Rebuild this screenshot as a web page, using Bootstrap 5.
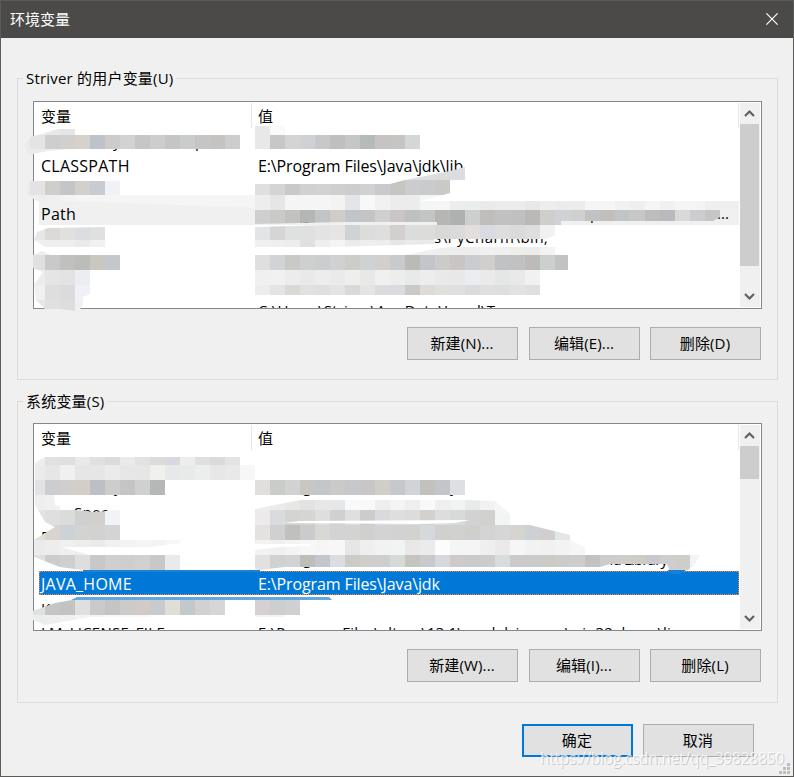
<!DOCTYPE html>
<html lang="zh-CN">
<head>
<meta charset="utf-8">
<meta name="viewport" content="width=device-width, initial-scale=1">
<title>环境变量</title>
<link href="https://cdn.jsdelivr.net/npm/bootstrap@5.3.0/dist/css/bootstrap.min.css" rel="stylesheet">
<style>
body{margin:0;background:#f0f0f0;overflow:hidden;color:#000;font:15px/20px "Open Sans","Noto Sans CJK SC",sans-serif}
.dialog{width:794px;height:777px;background:#f0f0f0;border:1px solid #5b5b59}
.titlebar{height:37px;background:#4c4a48;color:#fff;padding:0 15px 2px 9px}
.client{padding:40px 15px 0 16px}
.group-frame{border:1px solid #dcdcdc;height:302px;padding:22px 15px 0;margin-bottom:21px}
.group-frame.lower{padding-top:21px}
.group-title{top:-12px;left:5px;background:#f0f0f0;padding:0 3px;line-height:22px;white-space:nowrap;letter-spacing:.2px}
.var-list{width:729px;height:208px;border:1px solid #828790;background:#fff;overflow:hidden;padding:1px}
.list-head{height:26px;padding-left:4px}
.name-cell{width:217px;flex:none;padding-left:2px;letter-spacing:.25px}
.list-head .name-cell{width:213px;height:25px;border-right:1px solid #e5e5e5;letter-spacing:0}
.value-cell{padding-left:2px;white-space:nowrap;letter-spacing:-.12px}
.list-head .value-cell{height:25px;border-right:1px solid #e5e5e5;padding-left:6px;margin-right:1px}
.head-label{padding-top:3px}
.list-line{height:24px;margin-left:4px;width:700px;line-height:26px;flex:none;font-size:16px}
.list-line.tight{font-size:15px;line-height:27px}
.tight .value-cell{letter-spacing:.18px}
.hovered{background:#f0f0f0}
.chosen{background:#0078d7;color:#fff;outline:1px dotted #ff8728;outline-offset:-1px}
.scroll-track{width:20px;height:204px;background:#f0f0f0;flex:none}
.scroll-track svg{display:block;flex:none}
.thumb-long,.thumb-short{width:19px;background:#cdcdcd;height:142px}
.thumb-short{height:33px}
.win-btn{width:111px;height:33px;border:1px solid #adadad;border-radius:0;background:#e1e1e1;color:#000;padding:0 1px 1px 0;font-size:15px;line-height:20px;letter-spacing:.15px}
.win-btn.default-btn{border:2px solid #0078d7}
.btn-line{margin-top:18px;padding-right:1px}
.mid-btn{margin:0 10px 0 11px}
.footer-line{gap:10px;padding-right:24px}
.overlay-art{pointer-events:none;left:0;top:0}
.peek{font:15px "Open Sans",sans-serif}
</style>
<script src="https://cdn.jsdelivr.net/npm/bootstrap@5.3.0/dist/js/bootstrap.bundle.min.js"></script>
</head>
<body>
<main class="dialog position-relative">
  <header class="titlebar d-flex align-items-center justify-content-between">
    <span>环境变量</span>
    <svg width="12" height="12" viewBox="0 0 12 12"><path d="M.4.4l11.2 11.2M11.6.4L.4 11.6" stroke="#fff" stroke-width="1.2"/></svg>
  </header>
  <div class="client">
    <section class="group-frame position-relative">
      <div class="group-title position-absolute">Striver 的用户变量(U)</div>
      <div class="var-list d-flex">
        <div class="flex-grow-1">
          <div class="list-head d-flex"><div class="name-cell head-label">变量</div><div class="value-cell head-label flex-grow-1">值</div></div>
          <div class="list-line"></div>
          <div class="list-line d-flex"><div class="name-cell">CLASSPATH</div><div class="value-cell">E:\Program Files\Java\jdk\lib</div></div>
          <div class="list-line"></div>
          <div class="list-line hovered d-flex"><div class="name-cell">Path</div></div>
          <div class="list-line"></div><div class="list-line"></div><div class="list-line"></div>
          <div class="list-line tight d-flex"><div class="name-cell"></div><div class="value-cell">C:\Users\Striver\AppData\Local\T</div></div>
        </div>
        <div class="scroll-track d-flex flex-column">
          <svg width="19" height="21"><path d="M5 13l4.5-4.5L14 13" fill="none" stroke="#606060" stroke-width="2.2"/></svg>
          <div class="thumb-long"></div>
          <svg class="mt-auto" width="19" height="21"><path d="M5 8l4.5 4.5L14 8" fill="none" stroke="#606060" stroke-width="2.2"/></svg>
        </div>
      </div>
      <div class="btn-line d-flex justify-content-end">
        <button class="btn win-btn">新建(N)...</button><button class="btn win-btn mid-btn">编辑(E)...</button><button class="btn win-btn">删除(D)</button>
      </div>
    </section>
    <section class="group-frame lower position-relative">
      <div class="group-title position-absolute">系统变量(S)</div>
      <div class="var-list d-flex">
        <div class="flex-grow-1">
          <div class="list-head d-flex"><div class="name-cell head-label">变量</div><div class="value-cell head-label flex-grow-1">值</div></div>
          <div class="list-line"></div><div class="list-line"></div>
          <div class="list-line tight d-flex"><div class="name-cell">ComSpec</div><div class="value-cell">C</div></div>
          <div class="list-line tight d-flex"><div class="name-cell">D</div></div>
          <div class="list-line"></div>
          <div class="list-line chosen d-flex"><div class="name-cell">JAVA_HOME</div><div class="value-cell">E:\Program Files\Java\jdk</div></div>
          <div class="list-line tight d-flex"><div class="name-cell">K</div></div>
          <div class="list-line tight d-flex"><div class="name-cell">LM_LICENSE_FILE</div><div class="value-cell">E:\Program Files\altera\13.1\modelsim_ase\win32aloem\lic</div></div>
        </div>
        <div class="scroll-track d-flex flex-column">
          <svg width="19" height="21"><path d="M5 13l4.5-4.5L14 13" fill="none" stroke="#606060" stroke-width="2.2"/></svg>
          <div class="thumb-short"></div>
          <svg class="mt-auto" width="19" height="21"><path d="M5 8l4.5 4.5L14 8" fill="none" stroke="#606060" stroke-width="2.2"/></svg>
        </div>
      </div>
      <div class="btn-line d-flex justify-content-end">
        <button class="btn win-btn">新建(W)...</button><button class="btn win-btn mid-btn">编辑(I)...</button><button class="btn win-btn">删除(L)</button>
      </div>
    </section>
    <footer class="footer-line d-flex justify-content-end">
      <button class="btn win-btn default-btn">确定</button><button class="btn win-btn">取消</button>
    </footer>
  </div>
</main>
<svg class="overlay-art position-absolute" width="794" height="777" viewBox="0 0 794 777">
  <defs>
    <clipPath id="u1"><path d="M75 129V135H255V126H421V150H241V149H75L48 151 28 155 25 145 30 137 45 133 58 129Z"/></clipPath>
    <clipPath id="u2"><path d="M30 181H121V201H37L27 195V184ZM255 184H390L405 180 435 174 450 171 465 167V180H450V193L435 197 420 201H739V210H720V217L713 221H561V225H437V222H345L255 224ZM75 195H255V209L245 207 120 203 75 201Z"/></clipPath>
    <clipPath id="u3"><path d="M105 227V247H45L34 240 37 232 48 228ZM255 227L330 225H555V235L547 239H434V244L330 247H255Z"/></clipPath>
    <clipPath id="u4"><path d="M33 255L42 251 52 255H121V270H90V294L83 297V305L80 309H75V311L60 309H45L36 300 34 285 43 272 33 268ZM255 255H405L435 249 450 247H555V255H568V270H545L540 273V295H255Z"/></clipPath>
    <clipPath id="s1"><path d="M45 457H240V465H255V480H165V495H54L55 505 75 510 95 512 120 510V540H180V543L150 547H62L75 551 90 555H180V570H82L60 567 34 557V540L50 530 55 527 45 522 35 505V463Z"/></clipPath>
    <clipPath id="s2"><path clip-rule="evenodd" d="M255 480H465V495H255ZM255 509L300 500H470L495 501 510 514V525H530L570 535V540L585 547V555H700L695 564 687 571 680 574H671L667 564 610 564 600 567H285L259 570 255 569V550L280 547 310 546V544H255ZM283 523L300 521 470 520 455 523 420 524Z"/></clipPath>
    <clipPath id="s3"><path d="M33 611L55 603 72 600H301V615H285V617H90L45 625 33 620Z"/></clipPath>
    <clipPath id="bin"><path d="M434 239H555V250H434Z"/></clipPath>
    <clipPath id="lib"><path d="M604 564H670V572H604Z"/></clipPath>
  </defs>
  <g class="peek">
    <text x="113" y="147">y</text><text x="195" y="147">p</text>
    <text x="437" y="191">g</text><text x="302" y="219">g</text><text x="590" y="219">p</text><text x="694" y="219">_</text><text x="717" y="219">...</text>
    <text x="434" y="243" clip-path="url(#bin)" textLength="114">s\PyCharm\bin;</text>
    <text x="494" y="267">Q</text>
    <text x="114" y="492">y</text><text x="303" y="492">g</text><text x="450" y="492">y</text>
    <text x="303" y="564">g</text><text x="604" y="565" clip-path="url(#lib)" textLength="64">nd Library</text><text x="690" y="565">,</text>
  </g>
  <path d="M83 570H260V572H83Z" fill="#1e82d3"/>
  <g id="mosaic"></g>
  <path d="M667 570H686L680 574H672Z" fill="#1980d7"/>
  <path d="M71 600L77 597H329L332 600Z" fill="#63a7df"/>
  <g fill="#bdbdbd"><path d="M787 763h3v3h-3zM783 767h3v3h-3zM787 767h3v3h-3zM779 771h3v3h-3zM783 771h3v3h-3zM787 771h3v3h-3z"/></g>
  <g font-family="Open Sans, sans-serif" font-size="15.5">
    <text x="541" y="765" textLength="244" fill="#999" fill-opacity=".45">https://blog.csdn.net/qq_39828850</text>
    <text x="540" y="764" textLength="244" fill="#fff" fill-opacity=".75">https://blog.csdn.net/qq_39828850</text>
  </g>
</svg>
<script>
// Each strip: clip id, x, y, height, then one colour per 15px cell.
const strips = [
['u1',15,126,9,'ebebeb ebebeb e8e8e8 e4e5e5'],
['u1',15,135,14,'ebebeb e4e4e4 cdced0 d1d0ce d6d2cb bec2c9 cdcccb d2d2d2 c6c6c6 cdcdce c4c6c6 cacccb c6c5c4 c4c3c2 cdcdcf'],
['u1',15,149,6,'ececec ebebeb eeeeee f3f3f3'],
['u1',255,126,9,'e8e8e8 fafafa'],
['u1',255,135,14,'e8e8e7 c6c7c9 d6d4d2 cfd1d5 c7c8c9 c1bfbd c6c6c7 b5babb c5c4c2 c6c5c4 d3d7d7'],
['u2',15,181,14,'ebebeb e4e2e4 cfceca c4c5c9 d3cfcb c8cbcf f1f2f5'],
['u2',15,195,15,'eeeeee ededed efefef f3f3f3 f5f5f5 f5f5f5 f5f5f5 f5f5f5 f5f5f5 f5f5f5 f5f5f5 f5f5f5 f5f5f5 f5f5f5 f5f5f5 f5f5f5'],
['u2',405,165,15,'dddddd dddddd dcdcdd dcdde0'],
['u2',255,180,15,'e0dfdd d3d5d5 c9cac8 d0d2d2 d2d2d2 cfcfd0 cdcec9 d1d1d2 c9cacd c6c5c4 ccccce cacbcc c9cac6 dadbde'],
['u2',255,195,15,'ededed e6e6e6 f5f5f5 f5f5f5 f5f5f5 f3f3f2 e4e5e9 f7f8f8 f1f1f1 ececec ececeb f4f5f5 f6f6f6 ededed eaeded e9eaea ebeded ececec e8e8e7 ecedec e9ebee ececed f5f5f5 f5f5f5 f0f1f1 efefef f5f5f5 f0f0f0 f5f5f5 f4f4f4 efefef efefef efefef'],
['u2',255,210,15,'cfcfcf cacac9 c2c2bf b3b6b4 c2c3c4 cfcdc9 c1c5c9 c4c4c4 d0d0d0 c9c6c5 bfc0c1 c3c4c4 b8b6b3 afb0b2 cdcfcf bfbebc c1c1c1 bfc0c2 bab9b7 cecfcd d1d2d5 cfd0d0 c1c2c4 c0bfbd c1c5c6 c6c7c6 bebdbb b9babd d9d9d8 cccbcf c5c5c4'],
['u3',30,227,13,'e7e7e7 dbdad8 e0e0e1 dbdde1 dfe1e0'],
['u3',30,240,7,'f0f0f0 efefef efefef e9eaeb f1f1f1'],
['u3',255,225,15,'e3e4e5 d5d5d5 dfe0e0 e0e0e0 e3e3e3 e6e5e3 cfd3d4 dcdcda dedede d1d0cf dbdcdc dcdddb d8d8d7 dadada e3dddb d7dbe2 dddddd dadada dedede f1f1f1'],
['u3',255,240,7,'f0f0f0 efefef ededed dfe0e0 efefef f4f4f2 ebebec eeeeee ededed e6e6e6 eaeaea e9e9e9'],
['u4',30,249,6,'ededed f0f0f0'],
['u4',30,255,15,'e0dfe1 c9c9ca c0c0bf bbbdbb cac7bf c4c8cd'],
['u4',30,270,15,'ececea e4e5e4 e3e3e3 ecedf1'],
['u4',30,285,15,'f1f1ef dedede dbdbdb f0f1f7'],
['u4',30,300,11,'e7e7e7 e0e0e0 dddddd f1f1f5'],
['u4',405,247,8,'f1f1f1 eeefef edeeee eeeeee eeeeee f1f1f1 f0f0f0 edeeea ecedea f3f3f3'],
['u4',255,255,15,'e0dfdd d1d4d7 c9c9c6 cecfcf cccdce cfd1d2 cccdc7 cfd2d2 d1d0cf c8cacc babab7 c4c5c9 cccbca cac5c2 cbccd2 d0cfcd c0c2c5 c1c1c1 bcbbb9 cdcfce c0c3bf'],
['u4',255,270,15,'f0f0f0 f0f1f0 ececec e9e9e9 ededed eaeaea eeeeed e8e8e8 f0f0f0 ededed e8e9e9 ededed e9e9e9 e8e8e8 ebedf1 eaeaea e5e6e6 e9e9e9 f1f1f1 ffffff ffffff'],
['u4',255,285,10,'eeecec e3e5e5 d9d9d6 e0e1e0 dfdfdf e3e4e3 dbd9d8 e4e4e3 dcdbdd d9dbe0 c9c9c7 dddad8 e1e0dd dfdfe0 dadbdd e0dede dedede e2e2e2 dfdfdf'],
['s1',30,457,8,'ededed e0e1e3 dedfe0 e8e9eb e0e0e0 dbdbdb eaeaea e1e2e4 dcdbd7 d6d9dd ededed e1dfdd d8dadc e3e3e3'],
['s1',30,465,15,'ebebea e6e6e6 f0f0f0 e6e6e7 e6e6e6 ebebeb e7e7e7 e5e7e5 f0f0ec e6e9e8 e8e9e9 eceeee e7e7e7 e9e9e9 f7f7f7'],
['s1',30,480,15,'e2e2e2 cccdd0 d0cfcd d3cfc8 bbbfc6 cfcdcb c5c5c5 d0d0ce b5b8b7'],
['s1',30,495,15,'eeeeee f0f0f0 ffffff'],
['s1',30,510,15,'e4e4e4 dfdfdf dadcda d0d0d0 d2d0cd f2f3f6'],
['s1',30,525,15,'dededc d9d4ce cdd2d7 d2d4d2 d2d2d0 d4d4d4'],
['s1',30,540,15,'ebebeb ededed f0f0f0 ededed eaeaea f0f0f0 f2f2f2 f5f5f5 f3f3f3 f7f7f7'],
['s1',30,555,15,'e0e2e2 cbcccb cecfce dededf c8c8c8 cfcfcf cdcecd d1d1ce c8c8c6 e8eaec'],
['s2',255,480,15,'e0dfdd caccca d2d2d3 c9c7c1 c4c7ca cacbc9 c7c8cb c9c6c7 d1cdc7 c5c9cc d1d3d6 c3c1bc c4c5c8 dedfe2'],
['s2',255,500,10,'ededed ebebea e7e7e6 e0e3e2 e7e7e7 e6e7ea f7f9fb f8f9f8 edeeee f4f4f4 edefee f9f9f9 eef0ef f1f3f2 e9ebea f1f3f3 f5f5f5'],
['s2',255,510,15,'eceaea d9dbde d4d4d3 d5d5d2 dedede d0d0d0 e0dfdd cbcccb d9dadd dedede dcdcdc d2d1ce dcddde d8d9d9 d2d2d2 d1d1d0 f2f5f4'],
['s2',255,525,15,'e3e2e1 d0d0d1 c0c1bf cacbca d9d8d5 d2d3d2 d3d4d2 d0d0cf d3d3d3 d2d2d2 d3d2cf d6d9dc d0d0cf d1d1cf cfd0cc d3d4d3 d5d6d5 d5d4cf cdd0d4 d1cfcd e3e6e7'],
['s2',255,540,15,'f2f2f2 f0f0f0 f4f4f4 f7f7f7 f6f6f6 f7f7f7 e6e6e6 efefef f2f2f2 f2f4f4 e8e8e8 ebebeb fcfcfc f5f5f5 f5f5f5 efefef eaeaea f6f6f6 f2f2f2 f1f1f1 f3f3f3 f6f6f6'],
['s2',255,555,15,'e2e1df cfd2d1 d1d3d4 bfbdb7 c3c6ca dcdde0 cccbc8 d0cdca cdcecd d5d9d8 c6c4be c8c9cc d7d8db cdcac7 cacaca cccccc d8dcdc cbc9ca cacaca cbcac5 cacdcb cfcdcb c2c2c2 cccccd cecdc9 cdccc6 c8c8cd cecece cfcdca f1f3f6'],
['s3',30,600,15,'e0e0e0 c5c5c5 c3c3c3 dfdfdd c9cacb c4c4c4 cbccc9 d0cbc6 c8cad0 e1ddd7 c3c8cc d1d1d0 d6d6d8 ffffff ffffff d5d1d2 cccfce cfd0d2'],
['s3',30,615,10,'ebedec edeeee f1f1f1 f4f4f4 f5f5f5 f8f8f8 f8f8f8 f8f8f8 ffffff ffffff ffffff ffffff ffffff ffffff ffffff f4f4f4 f4f4f4']
];
const layer = document.getElementById('mosaic'), ns = 'http://www.w3.org/2000/svg';
strips.forEach(([clip, x, y, h, colours]) => {
  const g = document.createElementNS(ns, 'g');
  g.setAttribute('clip-path', `url(#${clip})`);
  g.setAttribute('shape-rendering', 'crispEdges');
  colours.split(' ').forEach((c, i) => {
    if (c === 'ffffff') return;
    const r = document.createElementNS(ns, 'rect');
    Object.entries({x: x + i * 15, y, width: 15, height: h, fill: '#' + c}).forEach(([k, v]) => r.setAttribute(k, v));
    g.append(r);
  });
  layer.append(g);
});
</script>
</body>
</html>
